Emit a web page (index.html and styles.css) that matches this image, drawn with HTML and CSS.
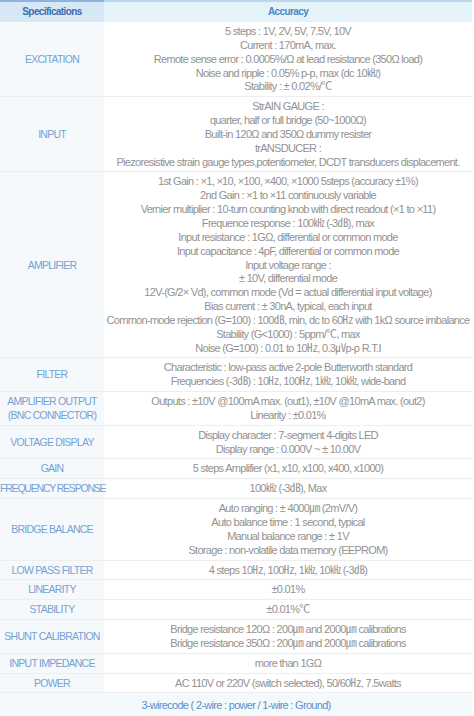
FILE: index.html
```html
<!DOCTYPE html>
<html>
<head>
<meta charset="utf-8">
<link rel="stylesheet" href="styles.css">
</head>
<body>
<table class="spec">
  <colgroup><col class="c-label"><col class="c-value"></colgroup>
  <thead>
    <tr><th class="h-label">Specifications</th><th class="h-value">Accuracy</th></tr>
  </thead>
  <tbody>
    <tr><td class="label">EXCITATION</td><td class="value">5 steps : 1V, 2V, 5V, 7.5V, 10V<br>Current : 170mA, max.<br>Remote sense error : 0.0005%/Ω at lead resistance (350Ω load)<br>Noise and ripple : 0.05% p-p, max (dc 10㎑)<br>Stability : ± 0.02%/℃</td></tr>
    <tr><td class="label">INPUT</td><td class="value">StrAIN GAUGE :<br>quarter, half or full bridge (50~1000Ω)<br>Built-in 120Ω and 350Ω dummy resister<br>trANSDUCER :<br>Piezoresistive strain gauge types,potentiometer, DCDT transducers displacement.</td></tr>
    <tr><td class="label">AMPLIFIER</td><td class="value">1st Gain : ×1, ×10, ×100, ×400, ×1000 5steps (accuracy ±1%)<br>2nd Gain : ×1 to ×11 continuously variable<br>Vernier multiplier : 10-turn counting knob with direct readout (×1 to ×11)<br>Frequence response : 100㎑ (-3㏈), max<br>Input resistance : 1GΩ, differential or common mode<br>Input capacitance : 4pF, differential or common mode<br>Input voltage range :<br>± 10V, differential mode<br>12V-(G/2× Vd), common mode (Vd = actual differential input voltage)<br>Bias current : ± 30nA, typical, each input<br>Common-mode rejection (G=100) : 100㏈, min, dc to 60㎐ with 1kΩ source imbalance<br>Stability (G&lt;1000) : 5ppm/℃, max<br>Noise (G=100) : 0.01 to 10㎐, 0.3㎶p-p R.T.I</td></tr>
    <tr><td class="label">FILTER</td><td class="value">Characteristic : low-pass active 2-pole Butterworth standard<br>Frequencies (-3㏈) : 10㎐, 100㎐, 1㎑, 10㎑, wide-band</td></tr>
    <tr><td class="label">AMPLIFIER OUTPUT<br>(BNC CONNECTOR)</td><td class="value">Outputs : ±10V @100mA max. (out1), ±10V @10mA max. (out2)<br>Linearity : ±0.01%</td></tr>
    <tr><td class="label">VOLTAGE DISPLAY</td><td class="value">Display character : 7-segment 4-digits LED<br>Display range : 0.000V ~ ± 10.00V</td></tr>
    <tr><td class="label">GAIN</td><td class="value">5 steps Amplifier (x1, x10, x100, x400, x1000)</td></tr>
    <tr><td class="label label-tight">FREQUENCY RESPONSE</td><td class="value">100㎑ (-3㏈), Max</td></tr>
    <tr><td class="label">BRIDGE BALANCE</td><td class="value">Auto ranging : ± 4000㎛ (2mV/V)<br>Auto balance time : 1 second, typical<br>Manual balance range : ± 1V<br>Storage : non-volatile data memory (EEPROM)</td></tr>
    <tr><td class="label">LOW PASS FILTER</td><td class="value">4 steps 10㎐, 100㎐, 1㎑, 10㎑ (-3㏈)</td></tr>
    <tr><td class="label">LINEARITY</td><td class="value">±0.01%</td></tr>
    <tr><td class="label">STABILITY</td><td class="value">±0.01%℃</td></tr>
    <tr><td class="label">SHUNT CALIBRATION</td><td class="value">Bridge resistance 120Ω : 200㎛ and 2000㎛ calibrations<br>Bridge resistance 350Ω : 200㎛ and 2000㎛ calibrations</td></tr>
    <tr><td class="label">INPUT IMPEDANCE</td><td class="value">more than 1GΩ</td></tr>
    <tr><td class="label">POWER</td><td class="value">AC 110V or 220V (switch selected), 50/60㎐, 7.5watts</td></tr>
    <tr><td class="note" colspan="2">3-wirecode ( 2-wire : power / 1-wire : Ground)</td></tr>
  </tbody>
</table>
</body>
</html>
```

FILE: styles.css
```css
html, body {
  margin: 0;
  padding: 0;
  background: #ffffff;
}
.spec {
  width: 472px;
  border-collapse: collapse;
  font-family: "Liberation Sans", "Noto Sans CJK KR", sans-serif;
  font-size: 11px;
  letter-spacing: -0.7px;
  line-height: 13.85px;
  table-layout: fixed;
}
.c-label { width: 104px; }
.spec th {
  height: 20px;
  padding: 0;
  font-size: 10px;
  letter-spacing: -0.6px;
  font-weight: bold;
  text-align: center;
  border-top: 2px solid #8eb2dc;
}
.h-label {
  background: #d6e8f5;
  color: #3d6cae;
}
.h-value {
  background: #e4f2f9;
  color: #4a86c5;
  border-top-color: #b9d6ec !important;
}
.spec td {
  padding: 3px 0 2px;
  border-bottom: 1px solid #eeeeee;
  text-align: center;
  vertical-align: middle;
  white-space: nowrap;
}
.label {
  background: #f6f9fb;
  color: #74a2d6;
  font-size: 10.5px;
  letter-spacing: -0.75px;
}
.label-tight {
  letter-spacing: -1.2px;
}
.value {
  color: #929292;
}
.note {
  background: #f4f9fb;
  color: #5b8fcb;
  height: 18px;
}
```
